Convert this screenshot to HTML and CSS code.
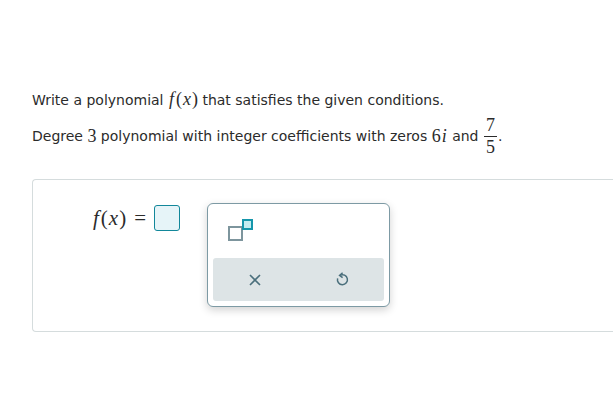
FILE: index.html
```html
<!DOCTYPE html>
<html lang="en">
<head>
<meta charset="UTF-8">
<title>Polynomial question</title>
<link rel="stylesheet" href="styles.css">
</head>
<body>
<div class="question">
  <p class="line first">Write a polynomial <span class="math"><i class="fn">f</i>(<i>x</i>)</span> that satisfies the given conditions.</p>
  <p class="line second">Degree <span class="math">3</span> polynomial with integer coefficients with zeros <span class="math">6<i>i</i></span> and <span class="frac"><span class="num">7</span><span class="den">5</span></span>.</p>
</div>
<div class="answer">
  <div class="eq">
    <span class="math lhs"><i class="fn">f</i>(<i>x</i>)<span class="eqsign">=</span></span>
    <span class="slot"></span>
  </div>
  <div class="palette">
    <div class="tools">
      <span class="sup-icon"><span class="base"></span><span class="exp"></span></span>
    </div>
    <div class="actions">
      <svg width="14" height="14" viewBox="0 0 14 14"><path d="M2 2 L12 12 M12 2 L2 12" stroke="#4a6f7c" stroke-width="1.6" fill="none"/></svg>
      <svg width="14" height="16" viewBox="0 0 14 16"><path d="M5.2 3.2 A5 5 0 1 1 2.6 6.4" stroke="#4a6f7c" stroke-width="1.5" fill="none"/><path d="M7.6 0.8 L4.6 3.4 L7.6 5.6" stroke="#4a6f7c" stroke-width="1.5" fill="none"/></svg>
    </div>
  </div>
</div>
</body>
</html>
```

FILE: styles.css
```css
body {
  margin: 0;
  padding: 0 0 0 32px;
  font-family: "DejaVu Sans", Verdana, sans-serif;
  font-size: 14px;
  color: #2b2b2b;
  background: #fff;
}
.question {
  padding-top: 89px;
}
.line {
  margin: 0;
}
.first {
  height: 20px;
  line-height: 20px;
  white-space: pre;
}
.second {
  margin-top: 7px;
  height: 40px;
  display: flex;
  align-items: center;
  white-space: pre;
}
.math {
  font-family: "Liberation Serif", "Times New Roman", serif;
  font-size: 18px;
}
.math i {
  font-style: italic;
  padding: 0 1px;
}
.math i.fn {
  padding-right: 2px;
}
.frac {
  display: inline-flex;
  flex-direction: column;
  align-items: center;
  font-family: "Liberation Serif", serif;
  font-size: 18px;
  line-height: 17px;
  margin: 0 1px 0 1px;
}
.num {
  border-bottom: 1px solid #2b2b2b;
  padding: 0 2px 2px;
}
.den {
  padding-top: 2px;
}
.answer {
  margin-top: 23px;
  width: 600px;
  height: 151px;
  border: 1px solid #d5dcdd;
  border-right: none;
  border-radius: 4px 0 0 4px;
  display: flex;
  align-items: flex-start;
}
.eq {
  display: flex;
  align-items: center;
  margin: 25px 0 0 59px;
}
.lhs {
  font-size: 21px;
  margin-right: 8px;
}
.eqsign {
  margin-left: 8px;
}
.slot {
  width: 24px;
  height: 24px;
  border: 1px solid #12879a;
  border-radius: 3px;
  background: #e6f4f8;
}
.palette {
  margin: 23px 0 0 27px;
  width: 181px;
  height: 102px;
  border: 1px solid #7d9aa4;
  border-radius: 6px;
  box-shadow: 0 3px 8px rgba(0, 0, 0, 0.18);
  background: #fff;
  display: flex;
  flex-direction: column;
}
.tools {
  height: 54px;
  padding: 15px 0 0 20px;
  box-sizing: border-box;
}
.sup-icon {
  position: relative;
  display: block;
  width: 26px;
  height: 21px;
}
.base {
  position: absolute;
  left: 0;
  top: 7px;
  width: 11px;
  height: 11px;
  border: 2px solid #7d959d;
  background: #fff;
}
.exp {
  position: absolute;
  left: 14px;
  top: 0;
  width: 7px;
  height: 7px;
  border: 2px solid #1596ab;
  background: #c4ecf1;
}
.actions {
  margin: 0 5px;
  height: 43px;
  background: #dde4e6;
  border-radius: 3px;
  display: flex;
  align-items: center;
  justify-content: space-between;
  padding: 0 35px;
}
```
